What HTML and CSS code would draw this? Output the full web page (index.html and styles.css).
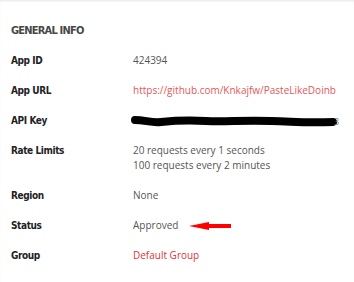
FILE: index.html
```html
<!DOCTYPE html>
<html lang="en">
<head>
  <meta charset="UTF-8">
  <title>General Info</title>
  <link rel="stylesheet" href="styles.css">
</head>
<body>
  <div class="card">
    <h3 class="card-title">GENERAL INFO</h3>

    <div class="info-grid">
      <div class="label">App ID</div>
      <div class="value">424394</div>

      <div class="label">App URL</div>
      <div class="value"><a class="link" href="#">https://github.com/Knkajfw/PasteLikeDoinb</a></div>

      <div class="label">API Key</div>
      <div class="value">
        <svg class="scribble" width="212" height="14" viewBox="0 0 212 14">
          <path d="M4 6 C 14 6, 20 9, 30 8 S 55 6, 75 7 S 110 6, 140 7 S 175 9, 202 8" stroke="#000" stroke-width="8" stroke-linecap="round" fill="none"/>
          <text x="203" y="11" font-size="9" fill="#6b7f99">3</text>
        </svg>
      </div>

      <div class="label">Rate Limits</div>
      <div class="value">
        20 requests every 1 seconds<br>
        100 requests every 2 minutes
      </div>

      <div class="label">Region</div>
      <div class="value">None</div>

      <div class="label">Status</div>
      <div class="value">Approved
        <svg class="arrow" width="44" height="10" viewBox="0 0 44 10">
          <path d="M0 5 L20 1 L20 3 L42 3 L42 7 L20 7 L20 9 Z" fill="#ff0000"/>
        </svg>
      </div>

      <div class="label">Group</div>
      <div class="value"><a class="link link-strong" href="#">Default Group</a></div>
    </div>
  </div>
</body>
</html>
```

FILE: styles.css
```css
body {
  margin: 0;
  background-color: #fff;
  font-family: "Open Sans", "Liberation Sans", sans-serif;
}

.card {
  border-top: 1px solid #eeeeee;
  box-shadow: inset 0 1px 2px rgba(0,0,0,0.04);
  padding: 22px 11px 20px;
  min-height: 240px;
}

.card-title {
  margin: 0 0 15px;
  font-family: "DejaVu Sans Condensed", sans-serif;
  font-stretch: condensed;
  font-size: 11px;
  line-height: 15px;
  font-weight: bold;
  letter-spacing: -0.8px;
  color: #474747;
}

.info-grid {
  display: grid;
  grid-template-columns: 122px 1fr;
  row-gap: 15px;
}

.label {
  font-family: "DejaVu Sans Condensed", sans-serif;
  font-stretch: condensed;
  font-size: 10px;
  line-height: 15px;
  font-weight: bold;
  letter-spacing: -0.4px;
  color: #222;
}

.value {
  font-size: 10px;
  line-height: 15px;
  color: #555;
}

.link {
  color: #e4575b;
  text-decoration: none;
}

.link-strong {
  color: #e03338;
}

.scribble {
  display: block;
  margin: 1px 0 0 -2px;
}

.arrow {
  vertical-align: middle;
  margin-left: 8px;
}
```
